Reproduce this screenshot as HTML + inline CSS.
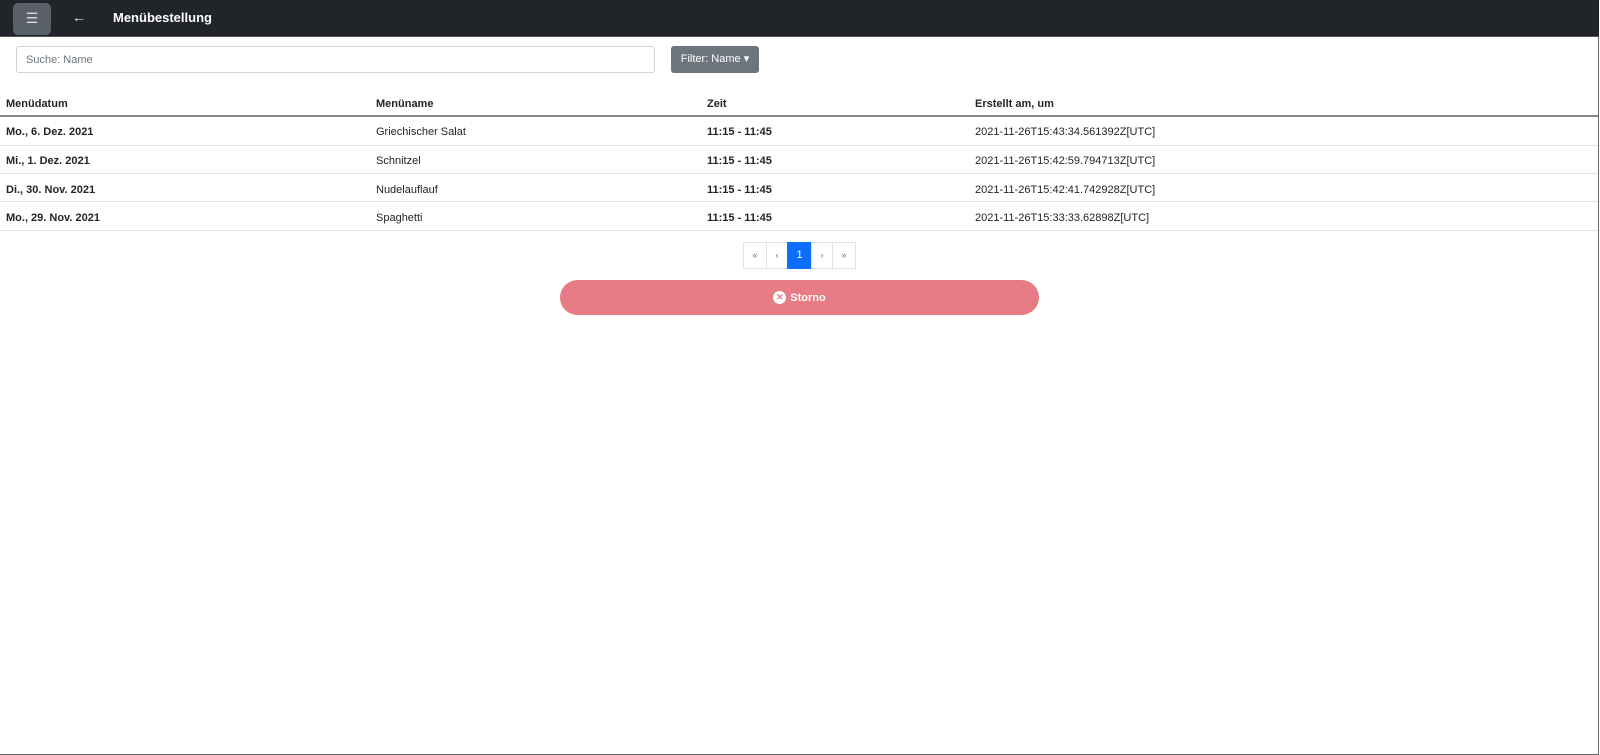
<!DOCTYPE html>
<html><head><meta charset="utf-8"><style>
*{box-sizing:border-box;margin:0;padding:0}
body{width:1600px;height:755px;background:#fff;font-family:"Liberation Sans",sans-serif;color:#212529;position:relative;overflow:hidden}
.frame{position:absolute;left:0;top:0;width:1599px;height:755px;border-right:1px solid #666;border-bottom:1px solid #666}
.nav{position:absolute;left:0;top:0;width:1599px;height:37px;background:#212529;border-bottom:1px solid #555}
.menu{position:absolute;left:13px;top:3px;width:38px;height:32px;background:#5a6068;border-radius:5px;color:#ddd;font-size:14px;text-align:center;line-height:31px}
.back{position:absolute;left:72px;top:9px;color:#ddd;font-size:14px}
.title{position:absolute;left:113px;top:10px;color:#fff;font-weight:bold;font-size:13px}
.search{position:absolute;left:16px;top:46px;width:639px;height:27px;border:1px solid #ced4da;border-radius:3px;font-size:11px;color:#6c757d;padding:7px 9px}
.filter{position:absolute;left:671px;top:46px;width:88px;height:27px;background:#6c757d;border-radius:3px;color:#fff;font-size:11px;line-height:27px;text-align:center}
.c{position:absolute;font-size:11px;white-space:nowrap}
.b{font-weight:bold}
.hl{position:absolute;left:0;width:1598px;height:2px;background:#888;top:115px}
.rl{position:absolute;left:0;width:1598px;height:1px;background:#dee2e6}
.pg{position:absolute;top:242px;height:27px;border:1px solid #dee2e6;font-size:9px;color:#6c757d;text-align:center;line-height:25px}
.storno{position:absolute;left:560px;top:280px;width:479px;height:35px;background:#e87c86;border-radius:18px;color:#fff;font-weight:bold;font-size:11px;display:flex;align-items:center;justify-content:center}
.x{display:inline-block;width:13px;height:13px;border-radius:50%;background:#fff;color:#e87c86;font-size:9px;line-height:13px;text-align:center;margin-right:4px}
</style></head><body>
<div class="frame"></div>
<div class="nav"><div class="menu">☰</div><div class="back">←</div><div class="title">Menübestellung</div></div>
<div class="search">Suche: Name</div>
<div class="filter">Filter: Name ▾</div>
<div class="c b" style="left:6px;top:98px">Menüdatum</div>
<div class="c b" style="left:376px;top:98px">Menüname</div>
<div class="c b" style="left:707px;top:98px">Zeit</div>
<div class="c b" style="left:975px;top:98px">Erstellt am, um</div>
<div class="hl"></div>
<div class="c b" style="left:6px;top:126px">Mo., 6. Dez. 2021</div>
<div class="c" style="left:376px;top:126px">Griechischer Salat</div>
<div class="c b" style="left:707px;top:126px">11:15 - 11:45</div>
<div class="c" style="left:975px;top:126px">2021-11-26T15:43:34.561392Z[UTC]</div>
<div class="rl" style="top:145px"></div>
<div class="c b" style="left:6px;top:155px">Mi., 1. Dez. 2021</div>
<div class="c" style="left:376px;top:155px">Schnitzel</div>
<div class="c b" style="left:707px;top:155px">11:15 - 11:45</div>
<div class="c" style="left:975px;top:155px">2021-11-26T15:42:59.794713Z[UTC]</div>
<div class="rl" style="top:173px"></div>
<div class="c b" style="left:6px;top:184px">Di., 30. Nov. 2021</div>
<div class="c" style="left:376px;top:184px">Nudelauflauf</div>
<div class="c b" style="left:707px;top:184px">11:15 - 11:45</div>
<div class="c" style="left:975px;top:184px">2021-11-26T15:42:41.742928Z[UTC]</div>
<div class="rl" style="top:201px"></div>
<div class="c b" style="left:6px;top:212px">Mo., 29. Nov. 2021</div>
<div class="c" style="left:376px;top:212px">Spaghetti</div>
<div class="c b" style="left:707px;top:212px">11:15 - 11:45</div>
<div class="c" style="left:975px;top:212px">2021-11-26T15:33:33.62898Z[UTC]</div>
<div class="rl" style="top:230px"></div>
<div class="pg" style="left:743px;width:24px">«</div>
<div class="pg" style="left:766px;width:22px">‹</div>
<div class="pg" style="left:787px;width:25px;background:#0d6efd;border-color:#0d6efd;color:#fff;font-size:11px">1</div>
<div class="pg" style="left:811px;width:22px">›</div>
<div class="pg" style="left:832px;width:24px">»</div>
<div class="storno"><span class="x">✕</span>Storno</div>
</body></html>
